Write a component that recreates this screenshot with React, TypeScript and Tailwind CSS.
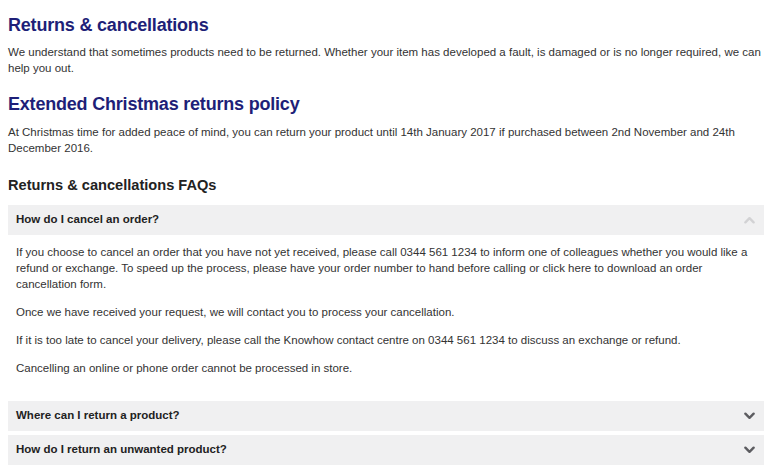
import React, { useState } from 'react';

type Faq = {
  question: string;
  answer: string[];
};

const faqs: Faq[] = [
  {
    question: 'How do I cancel an order?',
    answer: [
      'If you choose to cancel an order that you have not yet received, please call 0344 561 1234 to inform one of colleagues whether you would like a refund or exchange. To speed up the process, please have your order number to hand before calling or click here to download an order cancellation form.',
      'Once we have received your request, we will contact you to process your cancellation.',
      'If it is too late to cancel your delivery, please call the Knowhow contact centre on 0344 561 1234 to discuss an exchange or refund.',
      'Cancelling an online or phone order cannot be processed in store.',
    ],
  },
  {
    question: 'Where can I return a product?',
    answer: [],
  },
  {
    question: 'How do I return an unwanted product?',
    answer: [],
  },
];

const Chevron: React.FC<{ up: boolean }> = ({ up }) => (
  <svg
    viewBox="0 0 12 8"
    className={`w-[11px] h-[8px] ${up ? 'text-[#d2d2d4]' : 'text-[#5c5c60] rotate-180'}`}
    fill="none"
    stroke="currentColor"
    strokeWidth={2.6}
    strokeLinecap="round"
    strokeLinejoin="round"
  >
    <path d="M1.5 6.5 L6 2 L10.5 6.5" />
  </svg>
);

const App: React.FC = () => {
  const [openIndex, setOpenIndex] = useState<number | null>(0);

  return (
    <div className="min-h-screen bg-white pl-2 pr-1 pt-[12px] font-['Liberation_Sans',Arial,sans-serif] text-[#333]">
      <h1 className="text-[18px] font-bold leading-[26px] text-[#1e1f78] tracking-[-0.2px]">
        Returns &amp; cancellations
      </h1>
      <p className="mt-[6px] text-[11.5px] leading-[16px]">
        We understand that sometimes products need to be returned. Whether your item has developed a fault, is damaged or is no longer required, we can help you out.
      </p>

      <h2 className="mt-[15px] text-[18px] font-bold leading-[26px] text-[#1e1f78] tracking-[-0.2px]">
        Extended Christmas returns policy
      </h2>
      <p className="mt-[7px] text-[11.5px] leading-[16px]">
        At Christmas time for added peace of mind, you can return your product until 14th January 2017 if purchased between 2nd November and 24th December 2016.
      </p>

      <h3 className="mt-[19px] text-[14.6px] font-bold leading-[20px] text-[#222]">
        Returns &amp; cancellations FAQs
      </h3>

      <div className="mt-[10px] flex flex-col gap-[4px]">
        {faqs.map((faq, i) => {
          const open = openIndex === i;
          return (
            <div key={faq.question}>
              <button
                onClick={() => setOpenIndex(open ? null : i)}
                className="w-full h-[30px] flex items-center justify-between bg-[#f0f0f1] pl-[8px] pr-[9px] text-left"
              >
                <span className="text-[11.5px] font-bold text-[#222]">{faq.question}</span>
                <Chevron up={open} />
              </button>
              {open && (
                <div className="pl-[8px] pr-[12px] pt-[9px] pb-[21px] flex flex-col gap-[12px] text-[11.5px] leading-[16px]">
                  {faq.answer.map((line) => (
                    <p key={line}>{line}</p>
                  ))}
                </div>
              )}
            </div>
          );
        })}
      </div>
    </div>
  );
};

export default App;
